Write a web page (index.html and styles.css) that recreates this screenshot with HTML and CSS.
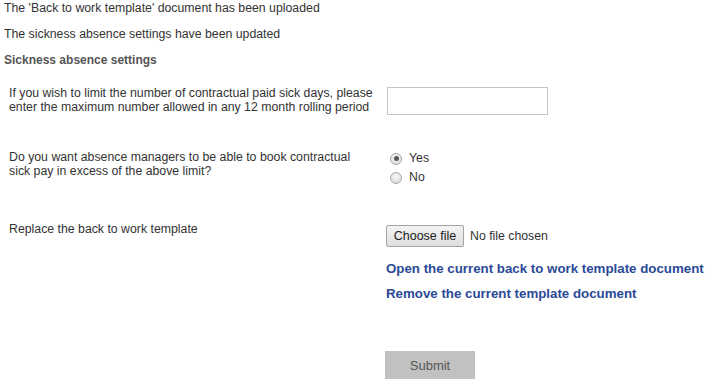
FILE: index.html
```html
<!DOCTYPE html>
<html lang="en">
<head>
  <meta charset="UTF-8" />
  <title>Sickness absence settings</title>
  <link rel="stylesheet" href="styles.css">
</head>
<body>
  <p class="mensagem">The 'Back to work template' document has been uploaded</p>
  <p class="mensagem">The sickness absence settings have been updated</p>
  <h2 class="titulo">Sickness absence settings</h2>

  <form class="formulario">
    <div class="linha">
      <label class="rotulo" for="dias">If you wish to limit the number of contractual paid sick days, please enter the maximum number allowed in any 12 month rolling period</label>
      <div class="campo">
        <input type="text" id="dias" class="caixa">
      </div>
    </div>

    <div class="linha">
      <div class="rotulo">Do you want absence managers to be able to book contractual sick pay in excess of the above limit?</div>
      <div class="campo">
        <label class="opcao"><input type="radio" name="excesso" checked> Yes</label>
        <label class="opcao"><input type="radio" name="excesso"> No</label>
      </div>
    </div>

    <div class="linha">
      <div class="rotulo">Replace the back to work template</div>
      <div class="campo">
        <div class="arquivo">
          <button type="button" class="escolher">Choose file</button>
          <span>No file chosen</span>
        </div>
        <a href="#" class="link">Open the current back to work template document</a>
        <a href="#" class="link">Remove the current template document</a>
      </div>
    </div>

    <div class="linha">
      <div></div>
      <div class="campo">
        <button type="submit" class="enviar">Submit</button>
      </div>
    </div>
  </form>
</body>
</html>
```
FILE: styles.css
```css
body {
  margin: 0;
  padding: 1px 4px 0;
  font-family: "Liberation Sans", Arial, sans-serif;
  font-size: 12.3px;
  color: #333;
  background: white;
}

.mensagem {
  margin: 0 0 11px;
  line-height: 15px;
}

.titulo {
  margin: 0;
  font-size: 12px;
  line-height: 15px;
  color: #555;
}

.formulario {
  padding-left: 5px;
}

/* cada pergunta numa linha de duas colunas */
.linha {
  display: grid;
  grid-template-columns: 364px 1fr;
  column-gap: 13px;
}

.linha:nth-child(1) {
  margin-top: 18px;
  height: 64px;
}

.linha:nth-child(2) {
  height: 72px;
}

.linha:nth-child(3) {
  height: 129px;
}

.rotulo {
  line-height: 14px;
}

.campo {
  display: flex;
  flex-direction: column;
  align-items: flex-start;
}

.caixa {
  width: 159px;
  height: 26px;
  margin: 1px 0 0 1px;
  padding: 0;
  border: 1px solid #c4c4c4;
  box-sizing: content-box;
}

.opcao {
  display: flex;
  align-items: center;
  line-height: 19px;
  color: #333;
}

.opcao:first-child {
  margin-top: -1px;
}

/* radio cinza, estilo antigo */
.opcao input {
  appearance: none;
  margin: 0 7px 0 4px;
  width: 12px;
  height: 12px;
  border: 1px solid #a9a9a9;
  border-radius: 50%;
  background: radial-gradient(circle at 50% 35%, #f8f8f8, #d6d6d6);
  box-sizing: border-box;
  position: relative;
}

.opcao input:checked::after {
  content: "";
  position: absolute;
  left: 2.5px;
  top: 2.5px;
  width: 5px;
  height: 5px;
  border-radius: 50%;
  background: #555;
}

.arquivo {
  display: flex;
  align-items: center;
  gap: 6px;
  margin-top: 3px;
}

.escolher {
  font-family: "Liberation Sans", Arial, sans-serif;
  font-size: 12.5px;
  height: 22px;
  width: 78px;
  padding: 0;
  border: 1px solid #a3a3a3;
  border-radius: 2px;
  background: linear-gradient(#f4f4f4, #dedede);
  color: #222;
}

.link {
  font-size: 13.3px;
  font-weight: bold;
  color: #2b4a97;
  text-decoration: none;
  margin-top: 14px;
  line-height: 16px;
}

.link + .link {
  margin-top: 9px;
}

.enviar {
  width: 90px;
  height: 28px;
  margin-left: -1px;
  border: none;
  background: #c1c1c1;
  color: #555;
  font-family: "Liberation Sans", Arial, sans-serif;
  font-size: 13px;
}
```
